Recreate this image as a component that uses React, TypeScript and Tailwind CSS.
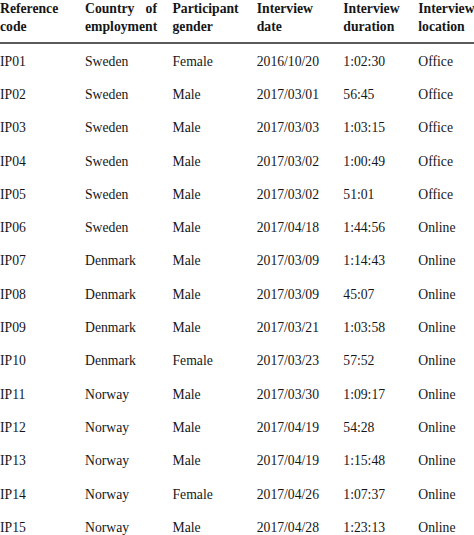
import React from "react";

const rows: string[][] = [
  ["IP01", "Sweden", "Female", "2016/10/20", "1:02:30", "Office"],
  ["IP02", "Sweden", "Male", "2017/03/01", "56:45", "Office"],
  ["IP03", "Sweden", "Male", "2017/03/03", "1:03:15", "Office"],
  ["IP04", "Sweden", "Male", "2017/03/02", "1:00:49", "Office"],
  ["IP05", "Sweden", "Male", "2017/03/02", "51:01", "Office"],
  ["IP06", "Sweden", "Male", "2017/04/18", "1:44:56", "Online"],
  ["IP07", "Denmark", "Male", "2017/03/09", "1:14:43", "Online"],
  ["IP08", "Denmark", "Male", "2017/03/09", "45:07", "Online"],
  ["IP09", "Denmark", "Male", "2017/03/21", "1:03:58", "Online"],
  ["IP10", "Denmark", "Female", "2017/03/23", "57:52", "Online"],
  ["IP11", "Norway", "Male", "2017/03/30", "1:09:17", "Online"],
  ["IP12", "Norway", "Male", "2017/04/19", "54:28", "Online"],
  ["IP13", "Norway", "Male", "2017/04/19", "1:15:48", "Online"],
  ["IP14", "Norway", "Female", "2017/04/26", "1:07:37", "Online"],
  ["IP15", "Norway", "Male", "2017/04/28", "1:23:13", "Online"],
];

const cols = "grid grid-cols-[85px_87.5px_84.2px_86.6px_75px_1fr]";

export default function App() {
  return (
    <div
      className="w-[474px] h-[535px] overflow-hidden bg-white text-[#161616] text-[13.7px]"
      style={{ fontFamily: '"Liberation Serif", "Times New Roman", serif' }}
    >
      <div className={`${cols} h-[44.3px] font-bold leading-[18px] border-b-2 border-[#5a5a5a] whitespace-nowrap`}>
        <div>Reference<br />code</div>
        <div className="w-[72px]">
          <div className="flex justify-between"><span>Country</span><span>of</span></div>
          <div>employment</div>
        </div>
        <div>Participant<br />gender</div>
        <div>Interview<br />date</div>
        <div>Interview<br />duration</div>
        <div>Interview<br />location</div>
      </div>
      <div className="pt-[1px]">
        {rows.map((r) => (
          <div key={r[0]} className={`${cols} h-[33.3px] items-center whitespace-nowrap`}>
            {r.map((c, i) => (
              <div key={i}>{c}</div>
            ))}
          </div>
        ))}
      </div>
    </div>
  );
}
